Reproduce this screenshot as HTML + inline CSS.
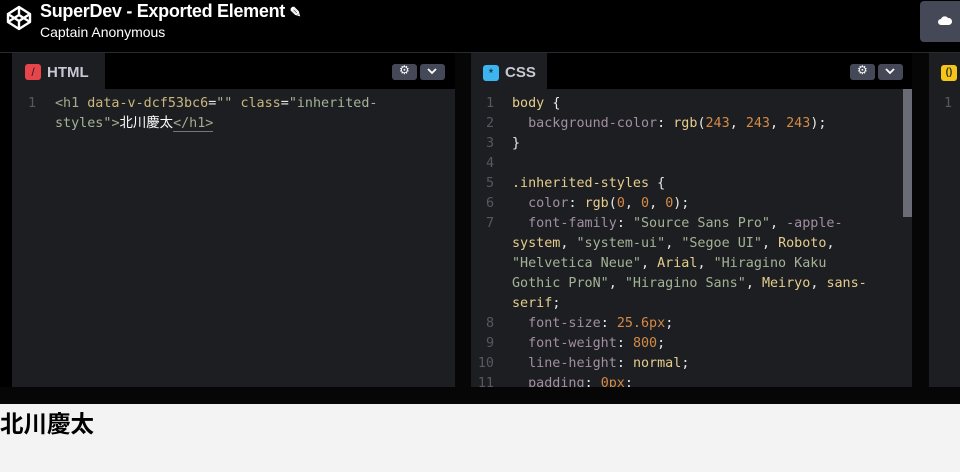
<!DOCTYPE html>
<html><head><meta charset="utf-8"><style>
*{margin:0;padding:0;box-sizing:border-box}
body{width:960px;height:472px;overflow:hidden;background:#000;font-family:"Liberation Sans","Noto Sans CJK JP",sans-serif;position:relative}
.abs{position:absolute}
.code{font-family:"DejaVu Sans Mono","Liberation Mono","Noto Sans CJK JP",monospace;font-size:13.4px;line-height:20px;white-space:pre;color:#c8c8c8}
.ln{color:#55585f;text-align:right;width:20px}
.t{color:#a9a88e}.a{color:#c9b77e}.s{color:#a3b495}.w{color:#fff}
.sel{color:#e5cd8c}.p{color:#a28fa1}.n{color:#d68a45}.k{color:#e5cd8c}.pu{color:#e8e8e8}
.btn{background:#444857;border-radius:3px;width:25px;height:16px}
.tab{font-weight:bold;font-size:15px;color:#c7c9d3}
</style></head><body>
<svg class="abs" style="left:5px;top:4px" width="28" height="28" viewBox="0 0 28 28" fill="none" stroke="#fff" stroke-width="2.4" stroke-linejoin="round"><path d="M14 3 L25 10 L25 18 L14 25 L3 18 L3 10 Z M3 10 L14 17 L25 10 M3 18 L14 11 L25 18 M14 3 V11 M14 17 V25"/></svg>
<div class="abs" style="left:40px;top:1px;color:#fff;font-size:18px;font-weight:bold;letter-spacing:-0.3px">SuperDev - Exported Element <span style="font-size:14px">✎</span></div>
<div class="abs" style="left:40px;top:24px;color:#fff;font-size:14px">Captain Anonymous</div>
<div class="abs" style="left:920px;top:1px;width:50px;height:41px;background:#444857;border-radius:4px"></div>
<svg class="abs" style="left:938px;top:15px" width="14" height="10" viewBox="0 0 14 10"><path d="M3 10 A3 3 0 0 1 3 4 A4 4 0 0 1 10 3 A3.5 3.5 0 0 1 11 10 Z" fill="#fff"/></svg>
<div class="abs" style="left:0;top:52px;width:960px;height:1px;background:#2a2b30"></div>
<div class="abs" style="left:12px;top:53px;width:443px;height:334px;background:#000"></div>
<div class="abs" style="left:12px;top:53px;width:93px;height:37px;background:#1d1e22"></div>
<div class="abs" style="left:12px;top:89px;width:443px;height:298px;background:#1d1e22"></div>
<div class="abs" style="left:25px;top:64px;width:16px;height:16px;background:#e8454a;border-radius:3px;color:#222;font-size:12px;line-height:16px;text-align:center">/</div>
<div class="abs tab" style="left:47px;top:64px">HTML</div>
<div class="abs btn" style="left:392px;top:64px"></div><div class="abs" style="left:399px;top:63px;color:#fff;font-size:12px">⚙</div>
<div class="abs btn" style="left:420px;top:64px"></div><svg class="abs" style="left:426px;top:67px" width="12" height="8"><path d="M2 2 L6 6 L10 2" stroke="#fff" stroke-width="1.8" fill="none"/></svg>
<div class="abs code ln" style="left:16px;top:94px">1</div>
<div class="abs code" style="left:55px;top:94px"><span class="t">&lt;h1</span> <span class="a">data-v-dcf53bc6</span><span class="pu">=</span><span class="s">""</span> <span class="a">class</span><span class="pu">=</span><span class="s">"inherited-</span>
<span class="s">styles"</span><span class="t">&gt;</span><span class="w">北川慶太</span><span class="t" style="border-bottom:1px solid #777">&lt;/h1&gt;</span></div>
<div class="abs" style="left:455px;top:53px;width:16px;height:334px;background:#060606"></div>
<div class="abs" style="left:471px;top:53px;width:76px;height:37px;background:#1d1e22"></div>
<div class="abs" style="left:471px;top:89px;width:441px;height:298px;background:#1d1e22"></div>
<div class="abs" style="left:903px;top:89px;width:9px;height:128px;background:#6a6c75"></div>
<div class="abs" style="left:483px;top:65px;width:16px;height:16px;background:#3cb4f0;border-radius:3px;color:#123;font-size:12px;line-height:17px;text-align:center">*</div>
<div class="abs tab" style="left:505px;top:64px">CSS</div>
<div class="abs btn" style="left:850px;top:64px"></div><div class="abs" style="left:857px;top:63px;color:#fff;font-size:12px">⚙</div>
<div class="abs btn" style="left:878px;top:64px"></div><svg class="abs" style="left:884px;top:67px" width="12" height="8"><path d="M2 2 L6 6 L10 2" stroke="#fff" stroke-width="1.8" fill="none"/></svg>
<div class="abs" style="left:471px;top:89px;width:441px;height:298px;overflow:hidden">
<div class="abs code ln" style="left:3px;top:5px">1
2
3
4
5
6
7




8
9
10
11</div>
<div class="abs code" style="left:41px;top:5px"><span class="sel">body</span> <span class="pu">{</span>
  <span class="p">background-color</span><span class="pu">:</span> <span class="k">rgb</span><span class="pu">(</span><span class="n">243</span><span class="pu">,</span> <span class="n">243</span><span class="pu">,</span> <span class="n">243</span><span class="pu">);</span>
<span class="pu">}</span>

<span class="sel">.inherited-styles</span> <span class="pu">{</span>
  <span class="p">color</span><span class="pu">:</span> <span class="k">rgb</span><span class="pu">(</span><span class="n">0</span><span class="pu">,</span> <span class="n">0</span><span class="pu">,</span> <span class="n">0</span><span class="pu">);</span>
  <span class="p">font-family</span><span class="pu">:</span> <span class="s">"Source Sans Pro"</span><span class="pu">,</span> <span class="p">-apple-</span>
<span class="k">system</span><span class="pu">,</span> <span class="s">"system-ui"</span><span class="pu">,</span> <span class="s">"Segoe UI"</span><span class="pu">,</span> <span class="k">Roboto</span><span class="pu">,</span>
<span class="s">"Helvetica Neue"</span><span class="pu">,</span> <span class="k">Arial</span><span class="pu">,</span> <span class="s">"Hiragino Kaku</span>
<span class="s">Gothic ProN"</span><span class="pu">,</span> <span class="s">"Hiragino Sans"</span><span class="pu">,</span> <span class="k">Meiryo</span><span class="pu">,</span> <span class="k">sans-</span>
<span class="k">serif</span><span class="pu">;</span>
  <span class="p">font-size</span><span class="pu">:</span> <span class="n">25.6px</span><span class="pu">;</span>
  <span class="p">font-weight</span><span class="pu">:</span> <span class="n">800</span><span class="pu">;</span>
  <span class="p">line-height</span><span class="pu">:</span> <span class="k">normal</span><span class="pu">;</span>
  <span class="p">padding</span><span class="pu">:</span> <span class="n">0px</span><span class="pu">;</span></div>
<div class="abs" style="left:432px;top:0;width:9px;height:128px;background:#6a6c75"></div>
</div>
<div class="abs" style="left:912px;top:53px;width:17px;height:334px;background:#060606"></div>
<div class="abs" style="left:929px;top:53px;width:40px;height:37px;background:#1d1e22"></div>
<div class="abs" style="left:929px;top:89px;width:40px;height:298px;background:#1d1e22"></div>
<div class="abs" style="left:941px;top:65px;width:16px;height:16px;background:#f5c518;border-radius:3px;color:#333;font-size:10px;line-height:16px;text-align:center;font-weight:bold">()</div>
<div class="abs code ln" style="left:932px;top:94px">1</div>
<div class="abs" style="left:0;top:387px;width:960px;height:17px;background:#060606"></div>
<div class="abs" style="left:0;top:404px;width:960px;height:68px;background:#f3f3f3"></div>
<div class="abs" style="left:0;top:406px;font-size:23.5px;font-weight:bold;color:#000;font-family:'Noto Sans CJK JP',sans-serif;line-height:32px">北川慶太</div>
</body></html>
